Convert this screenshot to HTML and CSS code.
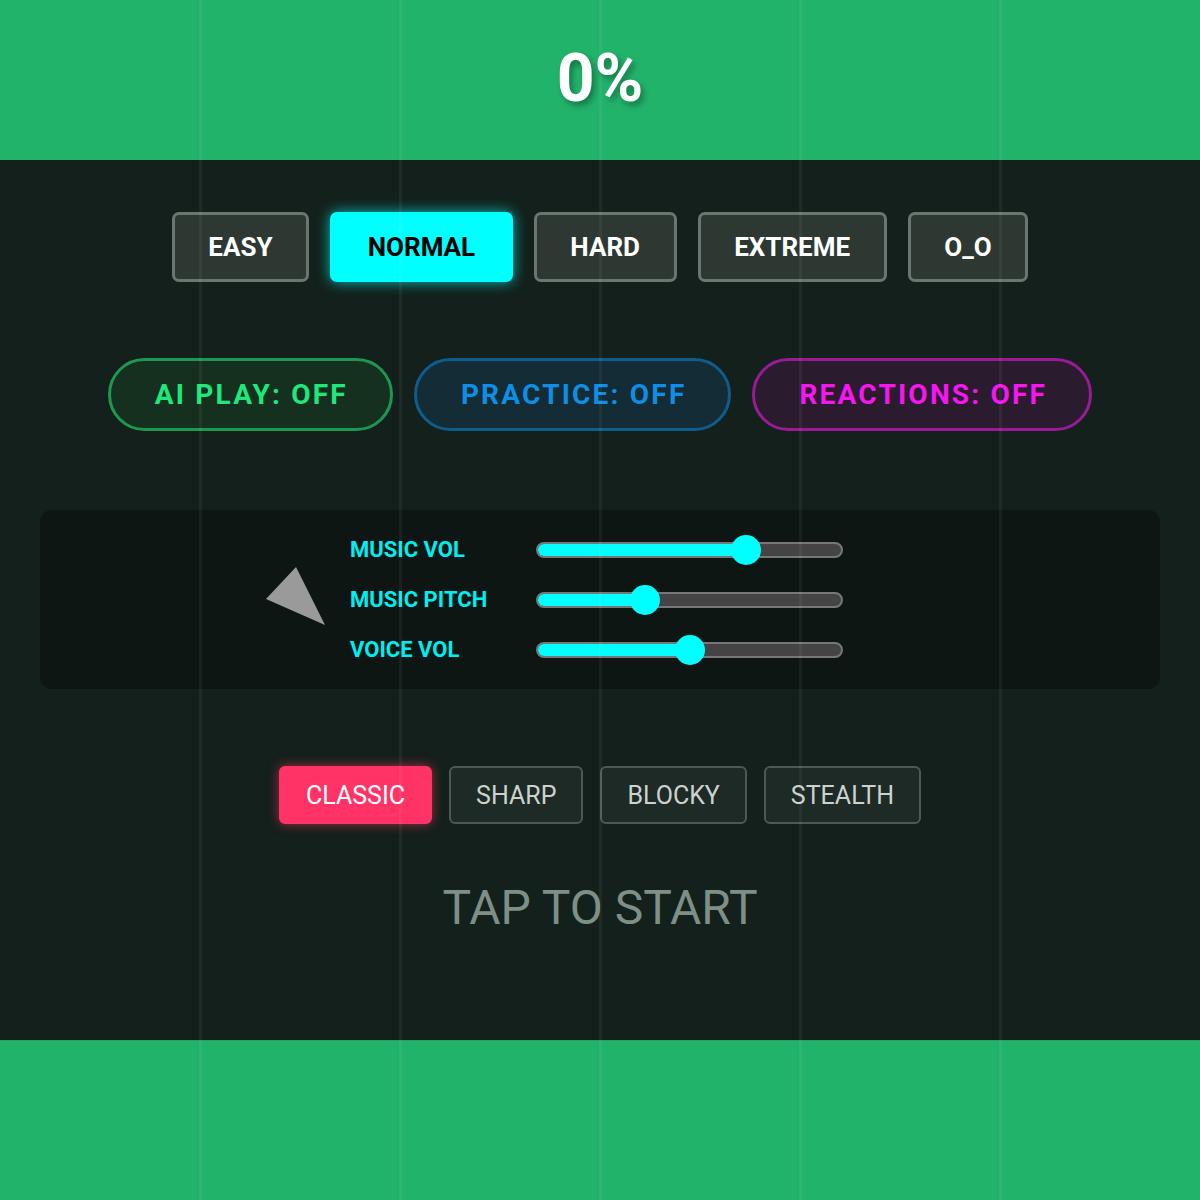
FILE: index.html
```html
<!DOCTYPE html>
<html>
<head>
<meta charset="utf-8">
<link rel="stylesheet" href="styles.css">
</head>
<body>
<div class="app">
  <header class="top-band">
    <div class="score">0%</div>
  </header>
  <main class="menu">
    <div class="difficulty">
      <button class="diff">EASY</button>
      <button class="diff active">NORMAL</button>
      <button class="diff">HARD</button>
      <button class="diff">EXTREME</button>
      <button class="diff">O_O</button>
    </div>
    <div class="toggles">
      <button class="toggle t-green">AI PLAY: OFF</button>
      <button class="toggle t-blue">PRACTICE: OFF</button>
      <button class="toggle t-pink">REACTIONS: OFF</button>
    </div>
    <section class="panel">
      <svg class="ship" width="60" height="60" viewBox="0 0 60 60">
        <polygon points="31,1 1,33 60,59" fill="#9a9a9a"/>
      </svg>
      <div class="sliders">
        <div class="label">MUSIC VOL</div>
        <div class="track"><div class="fill" style="width:68.7%"></div><div class="thumb" style="left:68.7%"></div></div>
        <div class="label">MUSIC PITCH</div>
        <div class="track"><div class="fill" style="width:35.3%"></div><div class="thumb" style="left:35.3%"></div></div>
        <div class="label">VOICE VOL</div>
        <div class="track"><div class="fill" style="width:50%"></div><div class="thumb" style="left:50%"></div></div>
      </div>
    </section>
    <div class="shapes">
      <button class="shape active">CLASSIC</button>
      <button class="shape">SHARP</button>
      <button class="shape">BLOCKY</button>
      <button class="shape">STEALTH</button>
    </div>
    <div class="start">TAP TO START</div>
  </main>
  <footer class="bottom-band"></footer>
</div>
<div class="grid-lines"></div>
</body>
</html>
```

FILE: styles.css
```css
* { box-sizing: border-box; }
html, body { margin: 0; padding: 0; }
body {
  width: 1200px;
  height: 1200px;
  overflow: hidden;
  font-family: Roboto, "Liberation Sans", sans-serif;
  background: #13201b;
}
.app {
  display: flex;
  flex-direction: column;
  height: 1200px;
}
.top-band {
  height: 160px;
  background: #22b36b;
  display: flex;
  align-items: center;
  justify-content: center;
}
.score {
  color: #fff;
  font-size: 66px;
  font-weight: 700;
  text-shadow: 3px 4px 6px rgba(0,0,0,0.35);
  margin-top: -4px;
}
.menu {
  height: 880px;
  background: #13201b;
  display: flex;
  flex-direction: column;
  align-items: center;
  padding-top: 52px;
}
.bottom-band {
  height: 160px;
  background: #22b36b;
  border-top: 1px solid #2a9e63;
}
button {
  font-family: Roboto, "Liberation Sans", sans-serif;
  cursor: pointer;
}
.difficulty {
  display: flex;
  gap: 21px;
  height: 70px;
}
.diff {
  height: 70px;
  padding: 0 33.6px;
  background: #2d3832;
  border: 3px solid #6a7770;
  border-radius: 7px;
  color: #fff;
  font-size: 26px;
  font-weight: 700;
}
.diff.active {
  background: #00ffff;
  border-color: #00ffff;
  color: #000;
  padding: 0 34.6px;
  box-shadow: 0 0 14px rgba(0,255,255,0.7);
}
.toggles {
  display: flex;
  gap: 21px;
  margin-top: 76px;
}
.toggle {
  height: 73px;
  padding: 0 42px 0 44px;
  border-radius: 37px;
  border: 3px solid;
  font-size: 28px;
  font-weight: 700;
  letter-spacing: 2.2px;
}
.t-green { color: #1ee87b; border-color: #1c9852; background: #16301f; }
.t-blue { color: #0d8fe6; border-color: #0f5d8e; background: #142c35; }
.t-pink { color: #f516f0; border-color: #9b1a98; background: #2a1c2e; }
.panel {
  margin-top: 79px;
  width: 1120px;
  height: 179px;
  background: #0d1613;
  border-radius: 12px;
  display: flex;
  align-items: center;
  padding-left: 225px;
}
.ship {
  flex: none;
  margin-top: -7px;
}
.sliders {
  margin-left: 25px;
  display: grid;
  grid-template-columns: 186px 307px;
  grid-auto-rows: 50px;
  align-items: center;
  margin-top: 0;
}
.label {
  color: #00eef0;
  font-size: 22px;
  font-weight: 700;
}
.track {
  position: relative;
  height: 16px;
  background: #444;
  border: 2px solid #777;
  border-radius: 8px;
}
.fill {
  height: 100%;
  background: #00ffff;
  border-radius: 6px 0 0 6px;
}
.thumb {
  position: absolute;
  top: 50%;
  width: 30px;
  height: 30px;
  margin-left: -15px;
  margin-top: -15px;
  border-radius: 50%;
  background: #00ffff;
}
.shapes {
  display: flex;
  gap: 17px;
  margin-top: 77px;
}
.shape {
  height: 58px;
  padding: 0 25px;
  background: #1e2a25;
  border: 2px solid #4b5a53;
  border-radius: 6px;
  color: #ccd3cf;
  font-size: 25px;
  font-weight: 400;
}
.shape.active {
  background: #ff3366;
  border-color: #ff3366;
  color: #fff;
  box-shadow: 0 0 12px rgba(255,51,102,0.6);
}
.start {
  margin-top: 55px;
  color: #7d8f86;
  font-size: 48px;
  font-weight: 400;
}
.grid-lines {
  position: fixed;
  inset: 0;
  pointer-events: none;
  background-image:
    linear-gradient(rgba(255,255,255,0.05), rgba(255,255,255,0.05)),
    linear-gradient(rgba(255,255,255,0.05), rgba(255,255,255,0.05)),
    linear-gradient(rgba(255,255,255,0.05), rgba(255,255,255,0.05)),
    linear-gradient(rgba(255,255,255,0.05), rgba(255,255,255,0.05)),
    linear-gradient(rgba(255,255,255,0.05), rgba(255,255,255,0.05));
  background-size: 3px 100%;
  background-repeat: no-repeat;
  background-position: 199px 0, 399px 0, 599px 0, 799px 0, 999px 0;
}
```
